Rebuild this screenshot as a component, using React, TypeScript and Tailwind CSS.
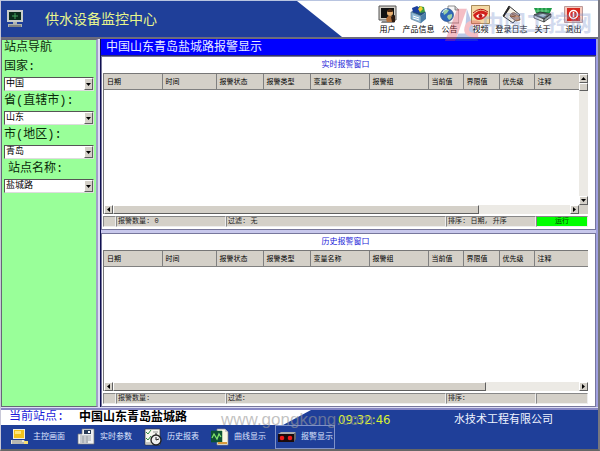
import type { ReactNode } from 'react'

const columns = [
  { name: '日期', width: 'w-[58px]' },
  { name: '时间', width: 'w-[54px]' },
  { name: '报警状态', width: 'w-[47px]' },
  { name: '报警类型', width: 'w-[47px]' },
  { name: '变量名称', width: 'w-[59px]' },
  { name: '报警组', width: 'w-[59px]' },
  { name: '当前值', width: 'w-[35px]' },
  { name: '界限值', width: 'w-[36px]' },
  { name: '优先级', width: 'w-[35px]' },
  { name: '注释', width: '' },
]

const filters = [
  { id: 'country', label: '国家:', value: '中国' },
  { id: 'province', label: '省(直辖市):', value: '山东' },
  { id: 'city', label: '市(地区):', value: '青岛' },
  { id: 'site', label: '站点名称:', value: '盐城路', indent: true },
]

const tools = [
  {
    name: '用户',
    icon: (
      <>
        <path d="M1 1h17v14H1z" fill="#d4d0c8" stroke="#555" />
        <path d="M3 3h13v10H3z" fill="#111" />
        <path d="M4 16h11l2 2H3z" fill="#888" />
        <circle cx="12" cy="8" r="3" fill="#e8b070" />
        <path d="M8 14q2-4 4-3l5 1v5H9z" fill="#b3703a" />
        <path d="M9 6q3-4 6 0l-1 1h-4z" fill="#4a2812" />
        <path d="M13 12l4-2v7h-3z" fill="#2b1a10" />
      </>
    ),
  },
  {
    name: '产品信息',
    icon: (
      <>
        <path d="M2 7l6-3 9 3-5 4z" fill="#24507c" />
        <path d="M2 7l10 4v7L2 14z" fill="#8fb9d6" stroke="#4a6c88" strokeWidth=".6" />
        <path d="M12 11l5-4v7l-5 4z" fill="#4a7ea8" />
        <path d="M3 3l5-2 3 2-1 5-6-1z" fill="#1b3f9b" />
        <path d="M10 1l5 1 1 5-5 1z" fill="#3d9a44" />
        <path d="M9 4l3-3 2 3-3 3z" fill="#f2d232" />
        <path d="M4 11l6 2M4 13l6 2" stroke="#fff" />
      </>
    ),
  },
  {
    name: '公告',
    icon: (
      <>
        <path d="M8 1h7l4 4v13H8z" fill="#f6f6f6" stroke="#777" strokeWidth=".8" />
        <path d="M15 1v4h4" fill="#ccc" stroke="#777" strokeWidth=".8" />
        <circle cx="7" cy="10" r="6.5" fill="#2e68b8" stroke="#1c3f7c" strokeWidth=".6" />
        <path d="M3 6q3-3 6-1l-2 3-3 2zM8 10l4-1q1 4-3 6l-2-3z" fill="#9bd0a4" />
        <path d="M2 8q2-4 5-4" stroke="#d6ecff" fill="none" />
      </>
    ),
  },
  {
    name: '视频',
    icon: (
      <>
        <path d="M.5.5h18v18H.5z" fill="#f4d9a4" stroke="#a98c5c" />
        <path d="M2 10q7-8 15-2-3 7-9 7-4 0-6-5z" fill="#d3201c" />
        <path d="M5 11q4-4 9-1-2 3-5 3-3 0-4-2z" fill="#fff" />
        <circle cx="9.5" cy="11" r="2" fill="#b51313" />
        <path d="M2 8q7-7 15-1" fill="none" stroke="#b51313" />
      </>
    ),
  },
  {
    name: '登录日志',
    icon: (
      <>
        <path d="M7 1l11 9-7 8L1 11z" fill="#f7f2e8" stroke="#333" />
        <path d="M7 1L1 11l1 1L8 3z" fill="#222" />
        <path d="M8 11q1-4 5-3l4 3 1 4-4 1-4-3z" fill="#c99476" stroke="#5b3420" strokeWidth=".7" />
        <path d="M9 11l4 1M10 9l4 2" stroke="#5b3420" strokeWidth=".7" />
      </>
    ),
  },
  {
    name: '关于',
    icon: (
      <>
        <path d="M1 3h18l-2 5H3z" fill="#1f9b47" />
        <path d="M2 6h14M5 3v4M9 3v4M13 3v4" stroke="#8fe0a4" strokeWidth=".7" />
        <path d="M1 10l6-3 11 2-7 5z" fill="#56666e" stroke="#222" strokeWidth=".7" />
        <path d="M1 10l10 4v3L1 13z" fill="#dfe4e6" stroke="#222" strokeWidth=".7" />
        <path d="M11 14l7-5v3l-7 5z" fill="#9aa6ab" stroke="#222" strokeWidth=".7" />
        <path d="M5 10l5-1 4 1-4 2z" fill="#b9ced6" />
      </>
    ),
  },
  {
    name: '退出',
    icon: (
      <>
        <path d="M.5 1.5h18v16H.5z" fill="#f5c9bd" stroke="#b99" />
        <path d="M3 3h13v13H3z" fill="#d6281e" />
        <circle cx="9.5" cy="9.5" r="4" fill="none" stroke="#fff" strokeWidth="1.5" />
        <path d="M9.5 7v5" stroke="#fff" strokeWidth="1.5" />
      </>
    ),
  },
]

const pages = [
  {
    name: '主控画面',
    icon: (
      <>
        <path d="M3 1h12v10H3z" fill="#f4efd8" />
        <path d="M4 2h10v8H4z" fill="#f3c21c" />
        <path d="M5 3h6v3H5z" fill="#ffe77a" />
        <path d="M1 12h13l3 4H1z" fill="#e9e5da" />
        <path d="M2 13h10M2 15h12" stroke="#888" />
        <path d="M14 13h4v3h-4z" fill="#f6dd70" />
      </>
    ),
  },
  {
    name: '实时参数',
    icon: (
      <>
        <path d="M5 1h12v15H1V6h4z" fill="#eef0f2" stroke="#777" strokeWidth=".7" />
        <path d="M7 2h7v4H7z" fill="#2b3e58" />
        <path d="M11 3h2v2h-2z" fill="#fff" />
        <path d="M3 8h11M3 10h11M3 12h11M3 14h8M6 8v7M10 8v7" stroke="#8a939b" strokeWidth=".8" />
      </>
    ),
  },
  {
    name: '历史报表',
    icon: (
      <>
        <path d="M1 1h15v16H1z" fill="#f7f7f0" stroke="#333" strokeWidth=".7" />
        <path d="M2 4l2 2 3-4M2 10l2 2 3-4" stroke="#2f8b40" fill="none" />
        <path d="M9 4h5M2 15h5" stroke="#999" />
        <circle cx="12" cy="12" r="5" fill="#eee" stroke="#222" strokeWidth="1.4" />
        <path d="M12 9v3l3-1M12 5v2" stroke="#222" fill="none" />
      </>
    ),
  },
  {
    name: '曲线显示',
    icon: (
      <>
        <path d="M6 1h8l3 3v13H6z" fill="#faf6e2" stroke="#888" strokeWidth=".7" />
        <path d="M14 1v3h3" fill="#ccc" />
        <path d="M0 3h11v11H0z" fill="#0f4d38" stroke="#062" strokeWidth=".5" />
        <path d="M1 10l2-4 3 5 2-5 2 3" stroke="#7fe36a" fill="none" strokeWidth="1.3" />
        <path d="M7 15h9" stroke="#d89b3b" strokeWidth="2" />
      </>
    ),
  },
  {
    name: '报警显示',
    active: true,
    icon: (
      <>
        <path d="M0 6l3-2h15l-2 2z" fill="#aaa" />
        <path d="M16 6l2-2v7l-2 3z" fill="#666" />
        <path d="M0 6h16v8H0z" fill="#1a0a0a" />
        <circle cx="4" cy="10" r="2.3" fill="#f01818" />
        <circle cx="12" cy="10" r="2.3" fill="#f01818" />
      </>
    ),
  },
]

const raised = 'bg-[#d4d0c8] border border-t-white border-l-white border-r-[#606060] border-b-[#606060]'
const cell = 'truncate border border-t-[#888] border-l-[#888] border-r-[#eee] border-b-[#eee] px-px'
const mono = "font-['Liberation_Mono','Noto_Sans_CJK_SC',monospace]"

function Arrow({ label, d, className = '' }: { label: string; d: string; className?: string }) {
  return (
    <button aria-label={label} className={`flex size-[9px] shrink-0 items-center justify-center ${raised} ${className}`}>
      <svg viewBox="0 0 5 5" className="size-[5px]">
        <path d={d} />
      </svg>
    </button>
  )
}

type AlarmPanelProps = {
  title: string
  count: string
  filter: string
  sort: string
  state?: string
  vertical?: boolean
}

function AlarmPanel({ title, count, filter, sort, state, vertical }: AlarmPanelProps) {
  return (
    <section className="flex flex-1 flex-col border border-[#77779c] bg-white pr-[7px] pb-[2px] pl-px">
      <h2 className="h-4 pt-px text-center text-[8px] leading-[14px] text-[#1c1cd8]">{title}</h2>
      <div className="flex flex-1 flex-col border-t border-l border-[#777]">
        <div className="flex flex-1">
          <div className="flex-1">
            <table className="w-full table-fixed border-collapse">
              <thead>
                <tr className="h-[15px] bg-[#d4d0c8]">
                  {columns.map((column) => (
                    <th
                      key={column.name}
                      className={`${column.width} border-r border-b border-[#808080] pl-[3px] text-left text-[7px] leading-[13px] font-normal whitespace-nowrap last:border-r-0`}
                    >
                      {column.name}
                    </th>
                  ))}
                </tr>
              </thead>
              <tbody />
            </table>
          </div>
          {vertical && (
            <div className="flex w-[9px] flex-col bg-[#eceae5]">
              <Arrow label="向上" d="M0 4h5L2.5 1z" />
              <div className={`h-2 ${raised}`} />
              <Arrow label="向下" d="M0 1h5L2.5 4z" className="mt-auto" />
            </div>
          )}
        </div>
        <div className="flex h-[9px] bg-[#eceae5]">
          <Arrow label="向左" d="M4 0v5L1 2.5z" />
          <div className="flex-1">
            <div className={`h-full w-4/5 ${raised}`} />
          </div>
          <Arrow label="向右" d="M1 0v5L4 2.5z" />
          {vertical && <div className="w-[9px] bg-[#d4d0c8]" />}
        </div>
      </div>
      <div className={`mt-[2px] flex h-[11px] bg-[#d4d0c8] text-[7px] leading-[9px] text-[#222] ${mono}`}>
        <div className={`w-[13px] ${cell}`} />
        <div className={`w-[110px] ${cell}`}>{count}</div>
        <div className={`flex-1 ${cell}`}>{filter}</div>
        <div className={`w-[90px] ${cell}`}>{sort}</div>
        <div className={`w-[52px] text-center ${cell} ${state ? 'bg-[#00ff00] text-[#004400]' : ''}`}>{state}</div>
      </div>
    </section>
  )
}

function Icon({ children }: { children: ReactNode }) {
  return (
    <svg viewBox="0 0 19 19" className="size-[19px] shrink-0" aria-hidden="true">
      {children}
    </svg>
  )
}

function Header() {
  return (
    <header className="relative flex h-[39px] justify-between border-t border-b-2 border-t-[#b8c4e0] border-b-[#6c6c7c] bg-white">
      <div className="flex w-[341px] items-center bg-[#1f3f99] pl-[5px] [clip-path:polygon(0_0,calc(100%-45px)_0,100%_100%,0_100%)]">
        <svg viewBox="0 0 18 18" className="size-[18px]" aria-hidden="true">
          <path d="M1 0h16v12H1z" fill="#c9cdc9" />
          <path d="M3 2h12v8H3z" fill="#0b2b1c" />
          <path d="M9 3v6M6 6h6" stroke="#43a35c" />
          <path d="M7 12h4v2H7zM2 14h14v3H2z" fill="#aeb3b0" />
          <path d="M3 16h12" stroke="#555" />
        </svg>
        <h1 className="ml-[21px] text-[14px] text-[#e8f58c]">供水设备监控中心</h1>
      </div>
      <nav className="flex pt-1 pr-[9px]">
        {tools.map((tool) => (
          <button key={tool.name} className="flex w-[31px] flex-col items-center text-[8px] leading-[11px] whitespace-nowrap text-black">
            <Icon>{tool.icon}</Icon>
            {tool.name}
          </button>
        ))}
      </nav>
      <div className="pointer-events-none absolute top-1 right-[6px] flex items-center opacity-35">
        <svg viewBox="0 0 40 40" className="size-[38px]">
          <path d="M14 4h10L12 38H1z" fill="#e0485c" />
          <path d="M24 4l12 34H12l3-8h7z" fill="#3b62b8" />
          <path d="M38 20q-12-4-14 4t12 8" fill="none" stroke="#e0485c" strokeWidth="5" />
        </svg>
        <span className="text-[22px] leading-6 font-bold text-[#7f97cf]">中国工控网</span>
      </div>
    </header>
  )
}

function Sidebar() {
  return (
    <aside className={`w-[97px] shrink-0 border-t border-r-2 border-b border-l border-t-[#667] border-r-[#a0a0c8] border-b-[#667] border-l-[#667] bg-[#99ff99] pl-[2px] ${mono}`}>
      <h2 className="h-[17px] text-[12px] leading-[17px] text-[#0a2a0a]">站点导航</h2>
      {filters.map((filter) => (
        <div key={filter.id}>
          <label
            htmlFor={filter.id}
            className={`block h-5 text-[12px] leading-5 text-[#0a2a0a] ${filter.indent ? 'pl-1' : ''}`}
          >
            {filter.label}
          </label>
          <div className="relative mr-[2px] h-[14px]">
            <select
              id={filter.id}
              className="block h-[14px] w-full appearance-none border border-t-[#555] border-r-[#ddd] border-b-[#ddd] border-l-[#555] bg-white pl-px text-[9px] leading-3 text-black"
            >
              <option>{filter.value}</option>
            </select>
            <span className={`pointer-events-none absolute top-px right-px flex h-3 w-[9px] items-center justify-center ${raised}`}>
              <svg viewBox="0 0 5 5" className="size-[5px]">
                <path d="M0 1h5L2.5 4z" />
              </svg>
            </span>
          </div>
        </div>
      ))}
    </aside>
  )
}

function Footer() {
  return (
    <footer className="relative flex border-t-2 border-[#8686c4] bg-[#1f3f99]">
      <div>
        <div className="flex h-[15px] w-[310px] bg-white pl-2 text-[12px] leading-[15px] [clip-path:polygon(0_0,100%_0,calc(100%-28px)_100%,0_100%)]">
          <span className={`w-[70px] text-[#1c1cd8] ${mono}`}>当前站点:</span>
          <span className="font-bold text-black">中国山东青岛盐城路</span>
        </div>
        <nav className="flex h-6 pl-[6px]">
          {pages.map((page) => (
            <button
              key={page.name}
              className={`flex items-center gap-1 border pl-[2px] text-[8px] whitespace-nowrap text-[#dfe6ff] ${page.active ? 'w-[60px] border-[#7f92c8]' : 'w-[67px] border-transparent'}`}
            >
              <Icon>{page.icon}</Icon>
              {page.name}
            </button>
          ))}
        </nav>
      </div>
      <time className="ml-[3px] w-[116px] font-['DejaVu_Sans_Condensed',sans-serif] text-[13px] leading-5 text-[#d8f032]">
        09:32:46
      </time>
      <p className="text-[11px] leading-[18px] text-[#f0f4ff]">水技术工程有限公司</p>
      <span className="pointer-events-none absolute top-0 left-[220px] font-['Liberation_Sans',sans-serif] text-[17px] leading-5 text-[#999]/60">
        www.gongkong.com
      </span>
    </footer>
  )
}

export default function App() {
  return (
    <div className="flex min-h-screen flex-col border-r-2 border-b-2 border-l border-r-[#77777f] border-b-[#666] border-l-[#c8c8d8] bg-[#dcdcf4] font-['Liberation_Sans','Noto_Sans_CJK_SC',sans-serif]">
      <Header />
      <div className="flex flex-1 pb-px">
        <Sidebar />
        <main className="ml-[2px] flex min-w-0 flex-1 flex-col border-r-2 border-l border-r-[#a0a0e0] border-l-[#101050] bg-[#c8c8ec]">
          <h2 className="h-[17px] border-b border-[#303070] bg-[#0000ff] pl-[5px] text-[12px] leading-4 text-[#e8ecff]">
            中国山东青岛盐城路报警显示
          </h2>
          <div className="flex flex-1 flex-col gap-[3px]">
            <AlarmPanel title="实时报警窗口" count="报警数量: 0" filter="过滤: 无" sort="排序: 日期, 升序" state="运行" vertical />
            <AlarmPanel title="历史报警窗口" count="报警数量:" filter="过滤：" sort="排序：" />
          </div>
        </main>
      </div>
      <Footer />
    </div>
  )
}
